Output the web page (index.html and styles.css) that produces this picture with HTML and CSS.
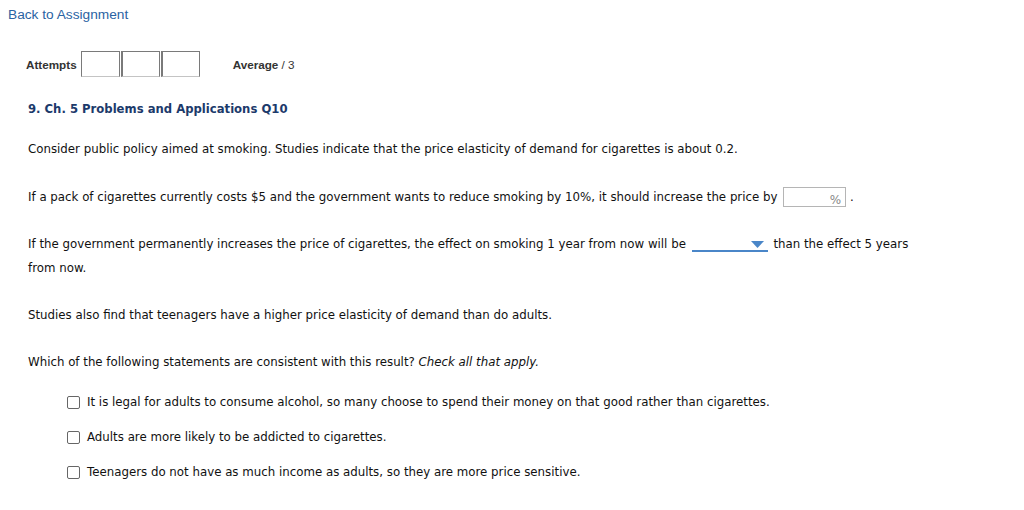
FILE: index.html
```html
<!DOCTYPE html>
<html>
<head>
<meta charset="utf-8">
<link rel="stylesheet" href="styles.css">
</head>
<body>
<div class="page">
  <a class="back" href="#">Back to Assignment</a>
  <div class="attempts-row">
    <span class="lbl">Attempts</span>
    <div class="boxes"><span class="box"></span><span class="box"></span><span class="box"></span></div>
    <span class="avg"><b>Average</b> / 3</span>
  </div>
  <h2 class="qtitle">9. Ch. 5 Problems and Applications Q10</h2>
  <div class="question">
    <p class="first">Consider public policy aimed at smoking. Studies indicate that the price elasticity of demand for cigarettes is about 0.2.</p>
    <p>If a pack of cigarettes currently costs $5 and the government wants to reduce smoking by 10%, it should increase the price by <span class="pct"><span class="pct-sign">%</span></span> .</p>
    <p>If the government permanently increases the price of cigarettes, the effect on smoking 1 year from now will be <span class="dropdown"><svg class="tri" width="13" height="8" viewBox="0 0 13 8"><polygon points="0,0 13,0 6.5,7" fill="#4a86c8"/></svg></span> than the effect 5 years from now.</p>
    <p>Studies also find that teenagers have a higher price elasticity of demand than do adults.</p>
    <p class="last">Which of the following statements are consistent with this result? <i>Check all that apply.</i></p>
    <ul class="choices">
      <li><span class="cb"></span>It is legal for adults to consume alcohol, so many choose to spend their money on that good rather than cigarettes.</li>
      <li><span class="cb"></span>Adults are more likely to be addicted to cigarettes.</li>
      <li><span class="cb"></span>Teenagers do not have as much income as adults, so they are more price sensitive.</li>
    </ul>
  </div>
</div>
</body>
</html>
```
FILE: styles.css
```css
html, body { margin: 0; padding: 0; background: #fff; }
.page { padding: 6px 8px 0 8px; font-family: "Liberation Sans", Arial, sans-serif; color: #222; }
.back { display: block; font-size: 13.7px; color: #2a63a3; text-decoration: none; line-height: 18px; }
.attempts-row { display: flex; align-items: center; margin: 26px 0 0 18px; height: 28px; font-size: 11.7px; }
.lbl { font-weight: bold; color: #333; margin-right: 4px; }
.boxes { display: flex; }
.box { width: 37px; height: 24px; border: 1px solid #7a7a7a; border-bottom-color: #c4c4c4; margin-right: 1px; background: #fff; }
.box + .box { border-left-width: 2px; width: 36px; }
.avg { margin-left: 32px; color: #333; }
.avg b { font-weight: bold; }
.qtitle { font-family: Verdana, "DejaVu Sans", sans-serif; font-size: 11.65px; font-weight: bold; color: #1c3a6b; margin: 22px 0 0 20px; line-height: 18px; }
.question { margin: 19px 0 0 20px; width: 895px; font-family: Verdana, "DejaVu Sans", sans-serif; font-size: 11.8px; color: #111; }
.question p { margin: 0 0 23px 0; line-height: 24px; }
.question p.first { margin-bottom: 24px; }
.question p.last { margin-bottom: 19px; }
.pct { display: inline-block; width: 61px; height: 18px; border: 1px solid #b5b5b5; vertical-align: middle; position: relative; top: -1px; text-align: right; box-sizing: content-box; margin-left: 2px; }
.pct-sign { color: #888; font-size: 12px; line-height: 18px; padding-right: 4px; }
.dropdown { display: inline-block; width: 76px; height: 12px; border-bottom: 2px solid #4a86c8; vertical-align: middle; position: relative; margin: 0 2px; }
.tri { position: absolute; right: 4px; top: 3px; }
.choices { list-style: none; margin: 0 0 0 39px; padding: 0; }
.choices li { display: flex; align-items: center; line-height: 18px; margin-bottom: 17px; }
.cb { width: 11px; height: 11px; border: 1px solid #666; border-radius: 2px; margin-right: 7px; flex: none; }
```
